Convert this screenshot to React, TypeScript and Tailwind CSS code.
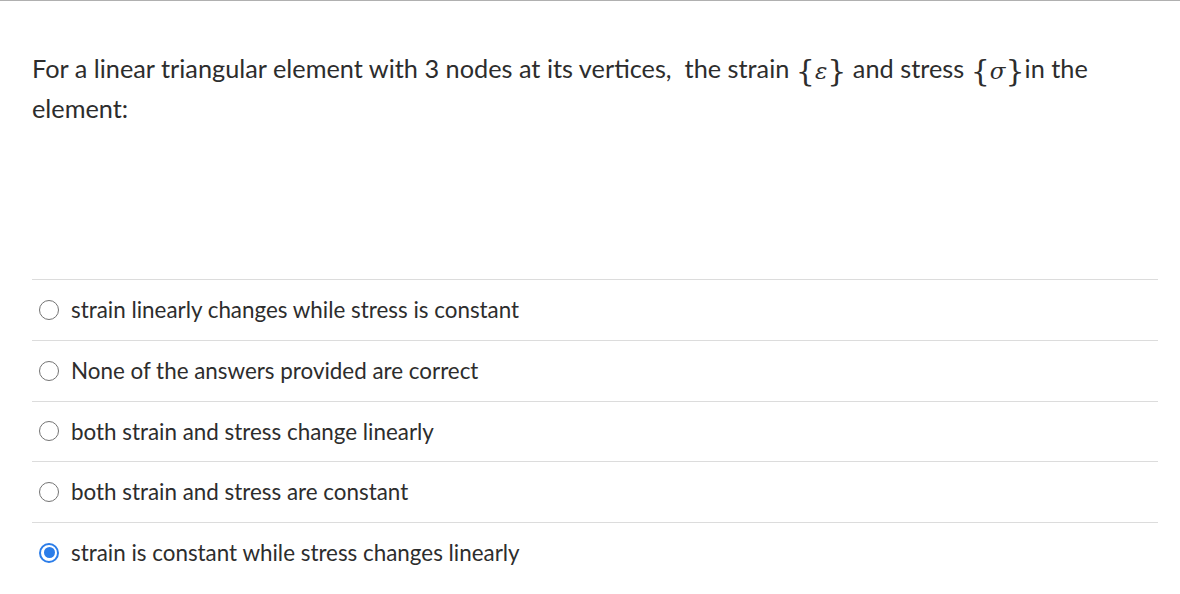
const options = [
  { text: 'strain linearly changes while stress is constant', checked: false },
  { text: 'None of the answers provided are correct', checked: false },
  { text: 'both strain and stress change linearly', checked: false },
  { text: 'both strain and stress are constant', checked: false },
  { text: 'strain is constant while stress changes linearly', checked: true },
];

function Radio({ checked }: { checked: boolean }) {
  if (checked) {
    return (
      <span className="w-[20px] h-[20px] rounded-full border-2 border-[#2b7de9] flex items-center justify-center shrink-0">
        <span className="w-[11px] h-[11px] rounded-full bg-[#2b7de9]" />
      </span>
    );
  }
  return <span className="w-[20px] h-[20px] rounded-full border border-[#737373] bg-white shrink-0" />;
}

function MathBrace({ sym }: { sym: string }) {
  return (
    <span className="font-['DejaVu_Serif',serif] inline-flex items-center leading-none align-[-3px] h-[28px]">
      <span className="text-[30px] leading-none font-light">{'{'}</span>
      <span className="italic text-[23px] leading-none">{sym}</span>
      <span className="text-[30px] leading-none font-light">{'}'}</span>
    </span>
  );
}

export default function App() {
  return (
    <div className="w-[1180px] h-[594px] bg-white border-t border-[#b0b0b0] font-['Lato',sans-serif] text-[#2d2d2d] overflow-hidden">
      <div className="pl-[32px] pr-[22px]">
        <p className="pt-[47px] text-[25.3px] leading-[40px] h-[278px]">
          For a linear triangular element with 3 nodes at its vertices,&nbsp; the strain <MathBrace sym="ε" /> and stress{' '}
          <MathBrace sym="σ" />in the element:
        </p>
        <div>
          {options.map((o) => (
            <div key={o.text} className="border-t border-[#dcdcdc] h-[60.75px] flex items-center gap-[12px] pl-[7px]">
              <Radio checked={o.checked} />
              <span className="text-[22.4px]">{o.text}</span>
            </div>
          ))}
        </div>
      </div>
    </div>
  );
}
